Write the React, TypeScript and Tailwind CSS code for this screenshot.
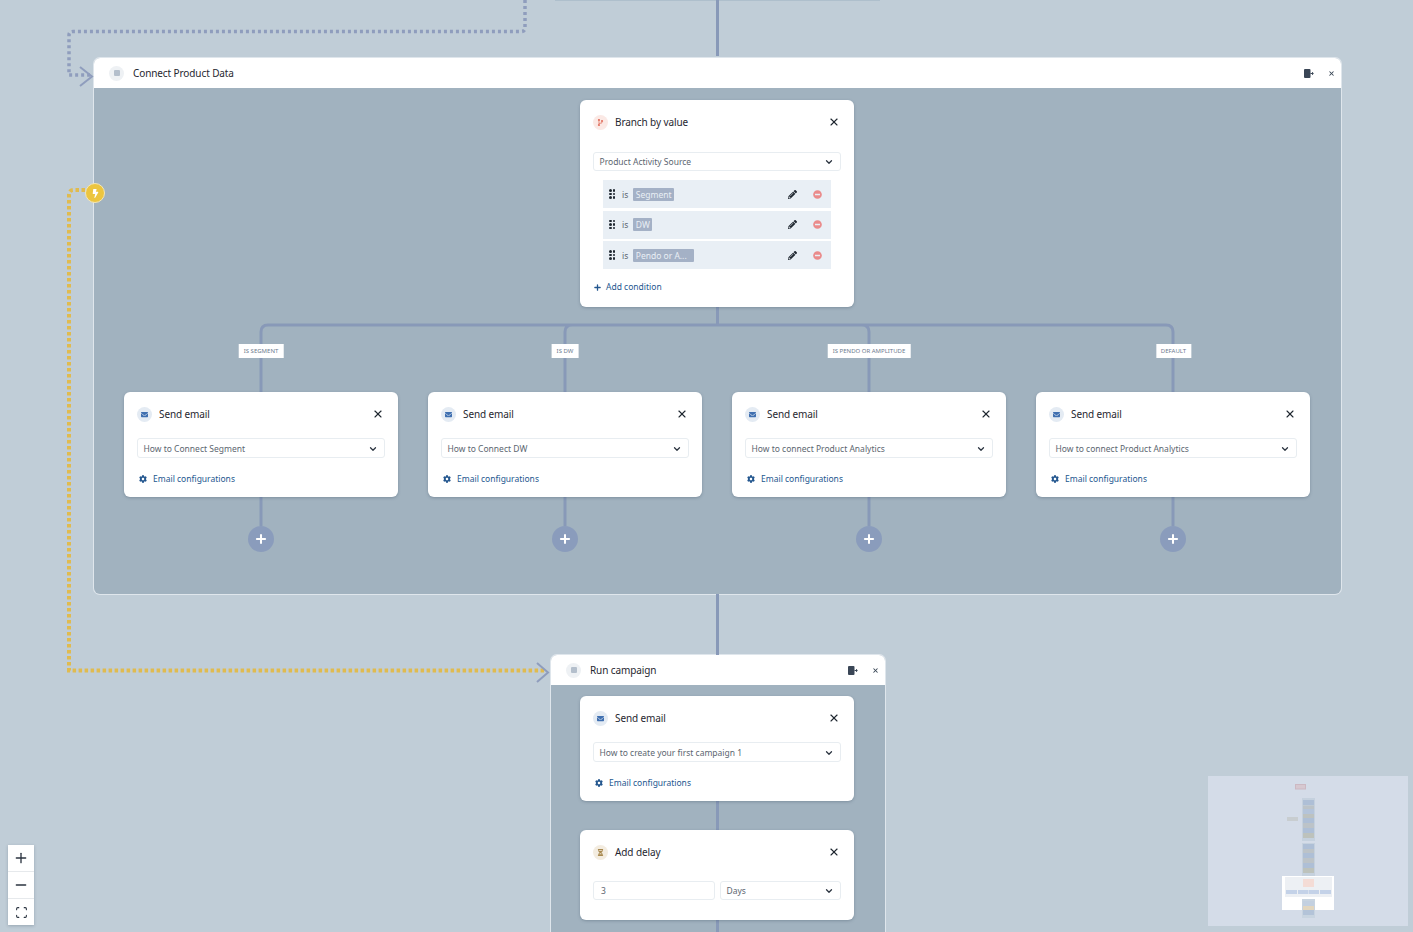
import React from 'react';
import { ChevronDown, Minus, Plus, Scan, X } from 'lucide-react';
import {
  FaBolt,
  FaCodeBranch,
  FaCog,
  FaEnvelope,
  FaHourglassHalf,
  FaMinusCircle,
  FaPencilAlt,
} from 'react-icons/fa';

const LINE = '#8899b8';

// minimap node rows: [y, height, colour]
const MINI_NODES: [number, number, string][] = [
  [24, 5, '#aebfd6'], [29.5, 3.5, '#bcc3c8'], [33, 5, '#b4c4da'], [38, 4, '#bdc2c0'], [42, 5, '#aebfd6'], [47, 5, '#bcc3c8'], [52, 5, '#aebfd6'], [57, 5, '#bdc2bc'],
  [68, 5, '#aebfd6'], [73, 4, '#bcc3c8'], [77, 5, '#aebfd6'], [82, 5, '#bcc3c8'], [87, 5, '#aebfd6'], [92, 5, '#bdc2bc'],
];

function Select({
  value,
  className = '',
  size = 'h-[19px] pt-[2px]',
}: {
  value: string;
  className?: string;
  size?: string;
}) {
  return (
    <div className={`flex items-center justify-between rounded-[3px] border border-[#e8edf1] bg-white pl-[5.5px] pr-[6.5px] text-[8.5px] text-[#5c6670] ${size} ${className}`}>
      <span>{value}</span>
      <ChevronDown size={10} strokeWidth={3} className="-mt-[2px] text-[#2b3440]" />
    </div>
  );
}

function CardHeader({ title, icon, tint }: { title: string; icon: React.ReactNode; tint: string }) {
  return (
    <div className="flex h-[15px] items-center">
      <div className={`flex h-[15px] w-[15px] items-center justify-center rounded-full ${tint}`}>{icon}</div>
      <div className="ml-[7px] flex-1 pb-[2px] text-[10px] leading-none tracking-[-0.1px] text-[#1f2730]">{title}</div>
      <X size={12} strokeWidth={2.25} className="mb-[2px] mr-[1px] text-[#1f2730]" />
    </div>
  );
}

function EmailCard({ position, template }: { position: string; template: string }) {
  return (
    <div className={`absolute h-[105px] w-[274px] rounded-[6px] bg-white px-[13px] pt-[15px] shadow-[0_1px_3px_rgba(60,80,100,0.35)] ${position}`}>
      <CardHeader title="Send email" tint="bg-[#e4ebf3]" icon={<FaEnvelope size={7} className="text-[#3f6fb0]" />} />
      <Select value={template} className="mt-[16px]" size="h-[20px] pt-[3px]" />
      <div className="mt-[17px] flex items-center pl-[2px] text-[8.5px] leading-none text-[#24578f]">
        <FaCog size={8} />
        <span className="ml-[6px]">Email configurations</span>
      </div>
    </div>
  );
}

function ConditionRow({ label, tagWidth }: { label: string; tagWidth: string }) {
  return (
    <div className="flex h-[28px] items-center bg-[#e9eff5] pl-[6px] pr-[9px]">
      <div className="grid grid-cols-2 gap-[1px]">
        {[0, 1, 2, 3, 4, 5].map((d) => (
          <span key={d} className="h-[2.5px] w-[2.5px] rounded-full bg-[#1f2730]" />
        ))}
      </div>
      <span className="ml-[7px] mt-[2px] text-[8.5px] text-[#5c6670]">is</span>
      <span className={`ml-[5px] h-[13px] whitespace-nowrap rounded-[1px] bg-[#a4b1c6] px-[2.5px] text-[8.5px] leading-[13px] text-[#e9eff5] ${tagWidth}`}>
        {label}
      </span>
      <FaPencilAlt size={9} className="ml-auto text-[#1f2730]" />
      <FaMinusCircle size={9} className="ml-[16px] text-[#ea8b8b]" />
    </div>
  );
}

function ExitIcon() {
  return (
    <svg width="10" height="9" viewBox="0 0 10 9" className="text-[#3a4656]">
      <rect x="0" y="0" width="6.5" height="9" rx="1" fill="currentColor" />
      <path d="M6.5 4.5H9M8 3.2L9.4 4.5L8 5.8" stroke="currentColor" strokeWidth="1" fill="none" />
    </svg>
  );
}

function GroupHeader({ title }: { title: string }) {
  return (
    <div className="flex h-[30px] items-center rounded-t-[6px] bg-white pl-[15px] pr-[6px]">
      <div className="flex h-[15px] w-[15px] items-center justify-center rounded-full bg-[#eef1f4]">
        <span className="h-[6px] w-[6px] rounded-[1px] bg-[#b4bfcc]" />
      </div>
      <div className="ml-[9px] mt-[1px] flex-1 text-[10px] tracking-[-0.1px] text-[#1f2730]">{title}</div>
      <ExitIcon />
      <X size={7} strokeWidth={3.5} className="ml-[14px] text-[#3a4656]" />
    </div>
  );
}

function EdgeLabel({ text, position }: { text: string; position: string }) {
  return (
    <div className={`absolute flex h-[14px] -translate-x-1/2 items-center whitespace-nowrap bg-white px-[5px] text-[6px] text-[#6d7a8e] ${position}`}>
      {text}
    </div>
  );
}

function AddButton({ position }: { position: string }) {
  return (
    <div className={`absolute flex h-[26px] w-[26px] -translate-x-1/2 items-center justify-center rounded-full bg-[#8a9cbc] ${position}`}>
      <Plus size={14} strokeWidth={3.5} className="text-white" />
    </div>
  );
}

function Edges() {
  return (
    <svg className="absolute inset-0" width="1413" height="932" fill="none">
      <path d="M717.5 0V56M717.5 594V655M717.5 801V830M717.5 920V932" stroke={LINE} strokeWidth="3" />
      <path
        d="M261 392V332Q261 325 268 325H1166Q1173 325 1173 332V392M565 392V332Q565 325 572 325H862Q869 325 869 332V392M717.5 307V325"
        stroke={LINE}
        strokeWidth="3"
      />
      <path d="M261 497V526M565 497V526M869 497V526M1173 497V526" stroke={LINE} strokeWidth="3" />
      <path d="M525 0V28Q525 31.5 521 31.5H73Q69 31.5 69 35V75H90" stroke="#8f9dbd" strokeWidth="3.5" strokeDasharray="3 3" />
      <path d="M85 190H74Q69 190 69 195V670.5H546" stroke="#e0bb4f" strokeWidth="4" strokeDasharray="3.5 2.5" />
      <path d="M80 67L92 76.5L80 86M537 663L548 672.5L537 682" stroke="#8f9dbd" strokeWidth="2" />
    </svg>
  );
}

function Minimap() {
  return (
    <svg className="absolute bottom-[6px] right-[5px]" width="200" height="150" viewBox="0 0 200 150">
      <rect width="200" height="150" fill="#d4dce8" />
      <rect x="87.5" y="8.5" width="10" height="4.5" fill="#d6c8d0" stroke="#ccb8c2" />
      <rect x="79" y="41" width="11" height="4" fill="#c8cdd0" />
      <rect x="94" y="22" width="13" height="43" fill="#c5d1de" />
      <rect x="94" y="67" width="13" height="34" fill="#c5d1de" />
      <rect x="74" y="100" width="52" height="34" fill="#ffffff" />
      <rect x="77" y="101" width="47" height="20" fill="#edf0f4" />
      <rect x="95" y="103" width="11" height="8" fill="#f4dcd6" />
      <rect x="78" y="114" width="11" height="4" fill="#c4d2e8" />
      <rect x="90" y="114" width="10" height="4" fill="#c4d2e8" />
      <rect x="100.5" y="114" width="10.5" height="4" fill="#c4d2e8" />
      <rect x="112" y="114" width="11" height="4" fill="#c4d2e8" />
      <rect x="94" y="123" width="13" height="19" fill="#c8d4e0" />
      <rect x="95" y="125" width="11" height="5" fill="#c3d0e0" />
      <rect x="95" y="130" width="11" height="4" fill="#e2d6bf" />
      <rect x="95" y="134" width="11" height="5" fill="#b3c3d8" />
      {MINI_NODES.map(([y, h, fill]) => (
        <rect key={y} x="95" y={y} width="11" height={h} fill={fill} />
      ))}
    </svg>
  );
}

export default function App() {
  return (
    <div className="relative h-[932px] w-[1413px] overflow-hidden bg-[#c0cdd7] font-['Noto_Sans','Open_Sans',sans-serif]">
      <div className="absolute left-[555px] top-0 h-px w-[325px] bg-[#aebfcc]" />

      {/* Connect Product Data group */}
      <div className="absolute left-[94px] top-[58px] h-[536px] w-[1247px] rounded-[6px] bg-[#a1b2bf] shadow-[0_0_0_1px_#dfe6ec]">
        <GroupHeader title="Connect Product Data" />
      </div>

      {/* Run campaign group */}
      <div className="absolute left-[551px] top-[655px] h-[300px] w-[334px] rounded-[6px] bg-[#a1b2bf] shadow-[0_0_0_1px_#dfe6ec]">
        <GroupHeader title="Run campaign" />
      </div>

      <Edges />

      <div className="absolute left-[85px] top-[183px] flex h-[20px] w-[20px] items-center justify-center rounded-full border border-[#f3e6b8] bg-[#ecc53f]">
        <FaBolt size={9} className="text-white" />
      </div>

      {/* Branch card */}
      <div className="absolute left-[580px] top-[100px] h-[207px] w-[274px] rounded-[6px] bg-white px-[13px] pt-[15px] shadow-[0_1px_3px_rgba(60,80,100,0.35)]">
        <CardHeader
          title="Branch by value"
          tint="bg-[#fbe9e5]"
          icon={<FaCodeBranch size={7} className="text-[#e0705f]" />}
        />
        <Select value="Product Activity Source" className="mt-[22px]" />
        <div className="mx-[10px] mt-[9px] flex flex-col gap-[2.5px]">
          <ConditionRow label="Segment" tagWidth="w-[41px]" />
          <ConditionRow label="DW" tagWidth="w-[19px]" />
          <ConditionRow label="Pendo or A..." tagWidth="w-[61px]" />
        </div>
        <div className="mt-[14px] flex items-center text-[8.5px] leading-none text-[#24578f]">
          <Plus size={9} strokeWidth={3.5} />
          <span className="ml-[4px]">Add condition</span>
        </div>
      </div>

      <EdgeLabel text="IS SEGMENT" position="left-[261px] top-[344px]" />
      <EdgeLabel text="IS DW" position="left-[565px] top-[344px]" />
      <EdgeLabel text="IS PENDO OR AMPLITUDE" position="left-[869px] top-[344px]" />
      <EdgeLabel text="DEFAULT" position="left-[1173.5px] top-[344px]" />

      <EmailCard position="left-[124px] top-[392px]" template="How to Connect Segment" />
      <EmailCard position="left-[428px] top-[392px]" template="How to Connect DW" />
      <EmailCard position="left-[732px] top-[392px]" template="How to connect Product Analytics" />
      <EmailCard position="left-[1036px] top-[392px]" template="How to connect Product Analytics" />

      <AddButton position="left-[261px] top-[526px]" />
      <AddButton position="left-[565px] top-[526px]" />
      <AddButton position="left-[869px] top-[526px]" />
      <AddButton position="left-[1173px] top-[526px]" />

      <EmailCard position="left-[580px] top-[696px]" template="How to create your first campaign 1" />

      {/* Add delay card */}
      <div className="absolute left-[580px] top-[830px] h-[90px] w-[274px] rounded-[6px] bg-white px-[13px] pt-[15px] shadow-[0_1px_3px_rgba(60,80,100,0.35)]">
        <CardHeader
          title="Add delay"
          tint="bg-[#f3ece0]"
          icon={<FaHourglassHalf size={7} className="text-[#a8894f]" />}
        />
        <div className="mt-[21px] flex gap-[5px]">
          <div className="flex h-[19px] w-[122px] items-center rounded-[3px] border border-[#e8edf1] bg-white pl-[7px] pt-[2px] text-[8.5px] text-[#5c6670]">
            3
          </div>
          <Select value="Days" className="flex-1" />
        </div>
      </div>

      {/* Zoom controls */}
      <div className="absolute left-[8px] top-[845px] flex w-[26px] flex-col bg-white shadow-[0_1px_3px_rgba(60,80,100,0.3)]">
        <div className="flex h-[27px] items-center justify-center border-b border-[#e6e9ec]">
          <Plus size={16} strokeWidth={2} className="text-[#2b3440]" />
        </div>
        <div className="flex h-[27px] items-center justify-center border-b border-[#e6e9ec]">
          <Minus size={16} strokeWidth={2} className="text-[#2b3440]" />
        </div>
        <div className="flex h-[26px] items-center justify-center">
          <Scan size={13} strokeWidth={2} className="text-[#2b3440]" />
        </div>
      </div>

      <Minimap />
    </div>
  );
}
